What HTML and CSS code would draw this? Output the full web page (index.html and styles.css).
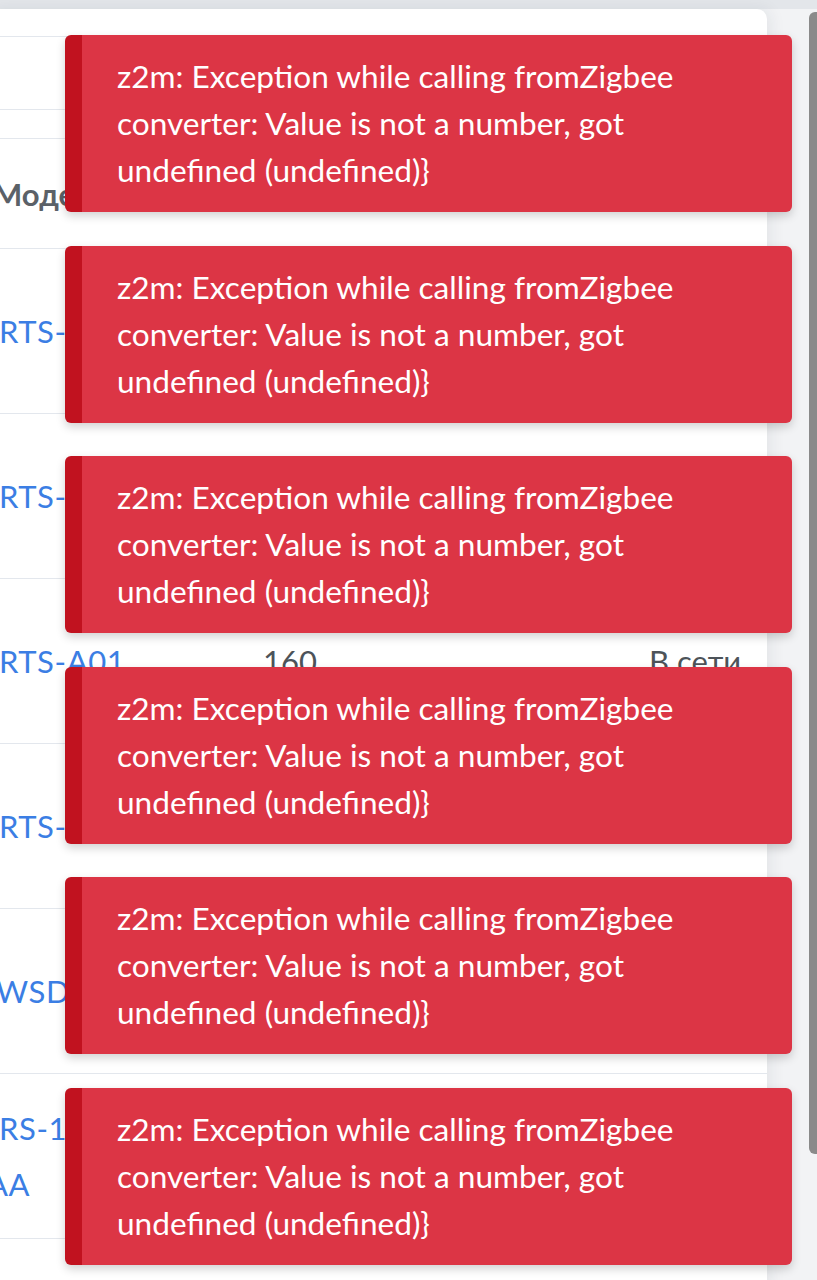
FILE: index.html
```html
<!DOCTYPE html>
<html lang="ru">
<head>
<meta charset="utf-8">
<title>Устройства</title>
<link rel="stylesheet" href="styles.css">
</head>
<body>
<div class="topbar"></div>
<main class="page">
  <section class="card">
    <div class="toolbar"></div>
    <div class="subbar"></div>
    <div class="row head">
      <div class="cell c1">Модель</div>
      <div class="cell c2"></div>
      <div class="cell c3"></div>
    </div>
    <div class="row">
      <div class="cell c1"><a class="link">RTS-</a></div>
      <div class="cell c2"></div>
      <div class="cell c3"></div>
    </div>
    <div class="row">
      <div class="cell c1"><a class="link">RTS-</a></div>
      <div class="cell c2"></div>
      <div class="cell c3"></div>
    </div>
    <div class="row">
      <div class="cell c1"><a class="link">RTS-A01</a></div>
      <div class="cell c2">160</div>
      <div class="cell c3">В сети</div>
    </div>
    <div class="row">
      <div class="cell c1"><a class="link">RTS-</a></div>
      <div class="cell c2"></div>
      <div class="cell c3"></div>
    </div>
    <div class="row">
      <div class="cell c1 cut"><a class="link">WSDC</a></div>
      <div class="cell c2"></div>
      <div class="cell c3"></div>
    </div>
    <div class="row">
      <div class="cell c1 wrap"><a class="link">RS-1<br>AA</a></div>
      <div class="cell c2"></div>
      <div class="cell c3"></div>
    </div>
  </section>
  <div class="gutter"></div>
</main>
<div class="scrollbar"></div>
<div class="toasts">
  <div class="toast"><p class="msg">z2m: Exception while calling fromZigbee converter: Value is not a number, got undefined (undefined)}</p></div>
  <div class="toast"><p class="msg">z2m: Exception while calling fromZigbee converter: Value is not a number, got undefined (undefined)}</p></div>
  <div class="toast"><p class="msg">z2m: Exception while calling fromZigbee converter: Value is not a number, got undefined (undefined)}</p></div>
  <div class="toast"><p class="msg">z2m: Exception while calling fromZigbee converter: Value is not a number, got undefined (undefined)}</p></div>
  <div class="toast"><p class="msg">z2m: Exception while calling fromZigbee converter: Value is not a number, got undefined (undefined)}</p></div>
  <div class="toast"><p class="msg">z2m: Exception while calling fromZigbee converter: Value is not a number, got undefined (undefined)}</p></div>
</div>
</body>
</html>
```
FILE: styles.css
```css
* { box-sizing: border-box; }
html, body { margin: 0; padding: 0; }
body {
  width: 817px;
  height: 1280px;
  overflow: hidden;
  background: #f2f3f5;
  font-family: Lato, "Noto Sans", sans-serif;
  position: relative;
}
.topbar {
  height: 9px;
  background: #e3e6ea;
}
.page {
  display: flex;
  align-items: flex-start;
}
.card {
  width: 777px;
  margin-left: -10px;
  flex: none;
  background: #fff;
  border-top-right-radius: 10px;
  padding-top: 27px;
  box-shadow: 4px 0 16px rgba(30, 40, 60, 0.07);
  min-height: 1280px;
}
.toolbar {
  height: 74px;
  border-top: 1.5px solid #e3e7ed;
  border-bottom: 1.5px solid #e3e7ed;
}
.subbar {
  height: 29px;
  border-bottom: 1.5px solid #e3e7ed;
}
.row {
  display: grid;
  grid-template-columns: 264px 386px 1fr;
  align-items: center;
  height: 165px;
  border-bottom: 1.5px solid #e3e7ed;
  padding-left: 9px;
  font-size: 31px;
  line-height: 56px;
  color: #4d5359;
}
.row.head {
  height: 110px;
  font-weight: 700;
  color: #5b6168;
}
.row.head .c1 { margin-left: -6px; }
.link {
  color: #3b7ee4;
  text-decoration: none;
  letter-spacing: 0.6px;
}
.cut { margin-left: -3px; letter-spacing: 1px; }
.wrap { margin-left: -12px; text-indent: 12px; }
.cell { white-space: nowrap; }
.gutter { flex: 1; }
.scrollbar {
  position: absolute;
  right: 0;
  top: 12px;
  width: 8px;
  height: 1142px;
  background: #8a8a8a;
  border-radius: 6px 0 0 6px;
}
.toasts {
  position: absolute;
  left: 65px;
  top: 35px;
  width: 727px;
  display: flex;
  flex-direction: column;
  gap: 33.6px;
}
.toast {
  height: 177px;
  background: #dc3545;
  border-left: 17px solid #c1121f;
  border-radius: 6px;
  padding: 18px 30px 18px 35px;
  box-shadow: 0 4px 10px rgba(0, 0, 0, 0.18);
}
.msg {
  margin: 0;
  max-width: 620px;
  color: #fff;
  font-family: Lato, "Noto Sans", sans-serif;
  font-size: 31.6px;
  line-height: 47px;
}
```
